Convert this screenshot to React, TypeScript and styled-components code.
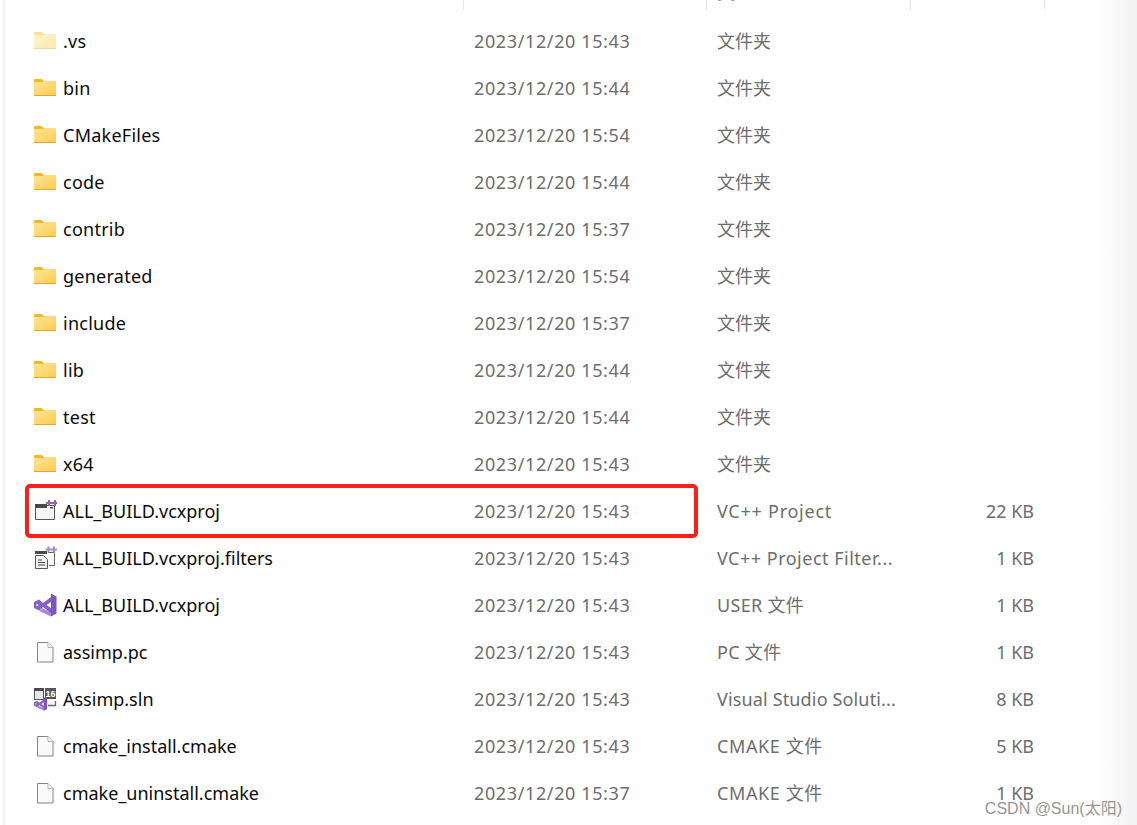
import styled, { createGlobalStyle } from "styled-components";

const GlobalStyle = createGlobalStyle`
  html, body {
    margin: 0;
    padding: 0;
    height: 100%;
    overflow: hidden;
    background: #fff;
  }
`;

const Page = styled.div`
  position: relative;
  width: 1137px;
  height: 825px;
  overflow: hidden;
  box-sizing: border-box;
  padding-left: 3px;
  font-family: "Noto Sans", "Noto Sans CJK SC", sans-serif;
  font-size: 18px;
`;

const Pane = styled.div`
  height: 100%;
  border-left: 2px solid #f1f1f1;
`;

const HeaderRow = styled.div`
  display: grid;
  grid-template-columns: 459px 243px 204px 134px;
  height: 10px;
  margin-bottom: 7px;
`;

const HeaderCell = styled.div`
  border-right: 1px solid #e5e5e5;
  overflow: hidden;
  display: flex;
  align-items: flex-end;
  padding-left: 10px;
  color: #3f5a7a;
  line-height: 24px;
`;

const HeaderLabel = styled.span`
  position: relative;
  top: -6px;
`;

const Row = styled.div`
  display: grid;
  grid-template-columns: 30px 411px 243px 204px 113px;
  height: 47px;
  align-items: center;
  padding-left: 28px;
`;

const IconSlot = styled.div`
  width: 24px;
  height: 24px;
  margin-top: 1px;

  svg {
    display: block;
  }
`;

const Name = styled.div<{ $tracking?: number }>`
  color: #0a0a0a;
  white-space: nowrap;
  letter-spacing: ${(p) => p.$tracking ?? 0}px;
`;

const Muted = styled.div<{ $tracking?: number; $lift?: boolean }>`
  color: #6d6d6d;
  white-space: nowrap;
  letter-spacing: ${(p) => p.$tracking ?? 0}px;
  padding-bottom: ${(p) => (p.$lift ? 2 : 0)}px;
`;

const Size = styled(Muted)`
  text-align: right;
`;

const Highlight = styled.div`
  position: absolute;
  left: 25px;
  top: 484px;
  width: 673px;
  height: 54px;
  box-sizing: border-box;
  border: 4px solid #ff1f17;
  border-radius: 5px;
`;

const EdgeFade = styled.div`
  position: absolute;
  top: 0;
  right: 0;
  width: 40px;
  height: 100%;
  background: linear-gradient(to right, rgba(242, 242, 242, 0), rgba(242, 242, 242, 1));
`;

const Watermark = styled.div`
  position: absolute;
  right: 15px;
  bottom: 6px;
  font-family: "Liberation Sans", "Noto Sans CJK SC", sans-serif;
  font-size: 16px;
  line-height: 20px;
  color: rgba(120, 120, 120, 0.8);
`;

type IconKind = "folder" | "folderFaded" | "vcx" | "filters" | "user" | "file" | "sln";

const VsMark = ({ x = 0, y = 0, s = 1 }: { x?: number; y?: number; s?: number }) => (
  <g transform={`translate(${x} ${y}) scale(${s})`}>
    <path d="M6 18 18 23.5V19L9 15Z" fill="#a68bd6" />
    <path d="M18 0.5l5.5 3v17L18 23.5Z" fill="#7c56bd" />
    <path d="M18 4v16l-8-6-4 3.5-5-2.5V9l5-2.5 4 3.5Z" fill="#8661c5" />
    <path d="M18 9 13.5 12 18 15ZM3.5 10.5v3L5.8 12Z" fill="#fff" />
  </g>
);

const Plus = ({ x, y, c = "#9a5fb5" }: { x: number; y: number; c?: string }) => (
  <path d={`M${x - 3} ${y}h6M${x} ${y - 3}v6`} stroke={c} strokeWidth="2" fill="none" />
);

const FileIcon = ({ kind }: { kind: IconKind }) => {
  switch (kind) {
    case "folder":
    case "folderFaded":
      return (
        <svg width="24" height="24" viewBox="0 0 24 24" opacity={kind === "folderFaded" ? 0.45 : 1}>
          <defs>
            <linearGradient id="folderBody" x1="0" y1="0" x2="1" y2="1">
              <stop offset="0" stopColor="#ffe596" />
              <stop offset="1" stopColor="#fdcb4c" />
            </linearGradient>
          </defs>
          <path d="M1 4C1 3.4 1.4 3 2 3h6.5L11 5.5h12V20H1Z" fill="#f9b61e" />
          <rect x="1" y="6" width="22" height="14" fill="url(#folderBody)" />
          <rect x="1" y="19" width="22" height="1" fill="#e6a62b" />
        </svg>
      );
    case "vcx":
      return (
        <svg width="24" height="24" viewBox="0 0 24 24">
          <path d="M2.5 6.5h19v14h-19z" fill="#f5f5f5" stroke="#555" />
          <rect x="2" y="5" width="12" height="4" fill="#4a4a4a" />
          <rect x="17" y="8" width="3" height="1.5" fill="#4a4a4a" />
          <Plus x={16} y={4} />
          <Plus x={22} y={4} />
        </svg>
      );
    case "filters":
      return (
        <svg width="24" height="24" viewBox="0 0 24 24">
          <path d="M15 6.5h6.5v13H16" fill="none" stroke="#666" />
          <rect x="2" y="5" width="12" height="3" fill="#4a4a4a" />
          <path d="M2.5 9.5h8l4 4v9h-12Z" fill="#f5f5f5" stroke="#555" />
          <path d="M5 14h4M5 16.5h7M5 19h7" stroke="#444" strokeWidth="1.2" />
          <Plus x={15.5} y={3.5} c="#b08ac8" />
          <Plus x={21} y={3.5} c="#b08ac8" />
        </svg>
      );
    case "user":
      return (
        <svg width="24" height="24" viewBox="0 0 24 24">
          <VsMark />
        </svg>
      );
    case "sln":
      return (
        <svg width="24" height="24" viewBox="0 0 24 24">
          <rect x="1.5" y="1.5" width="9" height="11" fill="#e6e6e6" stroke="#555" />
          <rect x="1" y="1" width="10" height="3" fill="#4a4a4a" />
          <rect x="12" y="1" width="11" height="11" fill="#555" />
          <text x="17.5" y="10" textAnchor="middle" fontSize="9" fontWeight="700" fill="#fff" fontFamily="Liberation Sans, sans-serif">16</text>
          <path d="M22.5 14v4.5H15" fill="none" stroke="#666" strokeWidth="1.4" />
          <VsMark x={0.5} y={10} s={0.58} />
        </svg>
      );
    default:
      return (
        <svg width="24" height="24" viewBox="0 0 24 24">
          <path d="M4.5 2.5h10.5l5 5v14.5h-15.5Z" fill="#fafafa" stroke="#858585" />
          <path d="M15 2.5v5h5" fill="#fff" stroke="#b5b5b5" />
        </svg>
      );
  }
};

type Entry = {
  icon: IconKind;
  name: string;
  date: string;
  type: string;
  tracking?: number;
  size?: string;
};

const entries: Entry[] = [
  { icon: "folderFaded", name: ".vs", date: "2023/12/20 15:43", type: "文件夹" },
  { icon: "folder", name: "bin", date: "2023/12/20 15:44", type: "文件夹" },
  { icon: "folder", name: "CMakeFiles", date: "2023/12/20 15:54", type: "文件夹" },
  { icon: "folder", name: "code", date: "2023/12/20 15:44", type: "文件夹" },
  { icon: "folder", name: "contrib", date: "2023/12/20 15:37", type: "文件夹" },
  { icon: "folder", name: "generated", date: "2023/12/20 15:54", type: "文件夹" },
  { icon: "folder", name: "include", date: "2023/12/20 15:37", type: "文件夹" },
  { icon: "folder", name: "lib", date: "2023/12/20 15:44", type: "文件夹" },
  { icon: "folder", name: "test", date: "2023/12/20 15:44", type: "文件夹" },
  { icon: "folder", name: "x64", date: "2023/12/20 15:43", type: "文件夹" },
  { icon: "vcx", name: "ALL_BUILD.vcxproj", date: "2023/12/20 15:43", type: "VC++ Project", tracking: 0.75, size: "22 KB" },
  { icon: "filters", name: "ALL_BUILD.vcxproj.filters", date: "2023/12/20 15:43", type: "VC++ Project Filter...", tracking: 0.5, size: "1 KB" },
  { icon: "user", name: "ALL_BUILD.vcxproj", date: "2023/12/20 15:43", type: "USER 文件", tracking: 0.3, size: "1 KB" },
  { icon: "file", name: "assimp.pc", date: "2023/12/20 15:43", type: "PC 文件", tracking: 0.3, size: "1 KB" },
  { icon: "sln", name: "Assimp.sln", date: "2023/12/20 15:43", type: "Visual Studio Soluti...", tracking: 0.15, size: "8 KB" },
  { icon: "file", name: "cmake_install.cmake", date: "2023/12/20 15:43", type: "CMAKE 文件", tracking: 0.6, size: "5 KB" },
  { icon: "file", name: "cmake_uninstall.cmake", date: "2023/12/20 15:37", type: "CMAKE 文件", tracking: 0.6, size: "1 KB" },
];

export default function App() {
  return (
    <Page>
      <GlobalStyle />
      <Pane>
        <HeaderRow>
          <HeaderCell />
          <HeaderCell />
          <HeaderCell>
            <HeaderLabel>类型</HeaderLabel>
          </HeaderCell>
          <HeaderCell />
        </HeaderRow>
        {entries.map((entry) => (
          <Row key={entry.name + entry.type}>
            <IconSlot>
              <FileIcon kind={entry.icon} />
            </IconSlot>
            <Name $tracking={entry.icon.startsWith("folder") ? 0.25 : 0}>{entry.name}</Name>
            <Muted $tracking={0.62}>{entry.date}</Muted>
            <Muted $tracking={entry.tracking} $lift={entry.type.includes("文件")}>
              {entry.type}
            </Muted>
            <Size>{entry.size}</Size>
          </Row>
        ))}
      </Pane>
      <Highlight />
      <EdgeFade />
      <Watermark>CSDN @Sun(太阳)</Watermark>
    </Page>
  );
}
